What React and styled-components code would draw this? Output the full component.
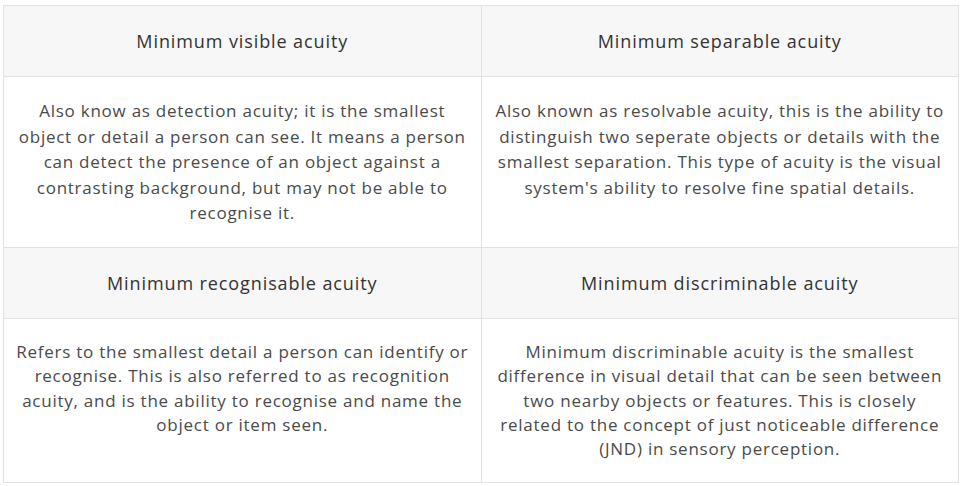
import React from "react";
import styled, { createGlobalStyle } from "styled-components";

const Global = createGlobalStyle`
  html, body { margin: 0; padding: 0; background: #ffffff; }
  body { font-family: "Open Sans", "DejaVu Sans", sans-serif; }
`;

const Page = styled.div`
  padding: 5px 4px 0 3px;
`;

const Table = styled.table`
  width: 100%;
  border-collapse: collapse;
  table-layout: fixed;
  border: 1px solid #e2e2e2;
`;

const HeadCell = styled.th`
  background: #f7f7f7;
  border: 1px solid #e2e2e2;
  color: #333333;
  font-weight: 400;
  font-size: 18px;
  letter-spacing: 0.9px;
  line-height: 24px;
  height: 70px;
  padding: 0 14px;
  text-align: center;
  vertical-align: middle;
`;

const BodyCell = styled.td`
  border: 1px solid #e2e2e2;
  color: #4a4a4a;
  font-size: 17px;
  letter-spacing: 0.75px;
  line-height: ${(p) => p.$lh || "24.5px"};
  padding: 21px 6px;
  text-align: center;
  vertical-align: top;
  white-space: nowrap;
`;

const Line = styled.span`
  display: block;
`;

const rows = [
  {
    heads: ["Minimum visible acuity", "Minimum separable acuity"],
    lh: "25.6px",
    bodies: [
      [
        "Also know as detection acuity; it is the smallest",
        "object or detail a person can see. It means a person",
        "can detect the presence of an object against a",
        "contrasting background, but may not be able to",
        "recognise it.",
      ],
      [
        "Also known as resolvable acuity, this is the ability to",
        "distinguish two seperate objects or details with the",
        "smallest separation. This type of acuity is the visual",
        "system's ability to resolve fine spatial details.",
      ],
    ],
  },
  {
    heads: ["Minimum recognisable acuity", "Minimum discriminable acuity"],
    lh: "24.3px",
    bodies: [
      [
        "Refers to the smallest detail a person can identify or",
        "recognise. This is also referred to as recognition",
        "acuity, and is the ability to recognise and name the",
        "object or item seen.",
      ],
      [
        "Minimum discriminable acuity is the smallest",
        "difference in visual detail that can be seen between",
        "two nearby objects or features. This is closely",
        "related to the concept of just noticeable difference",
        "(JND) in sensory perception.",
      ],
    ],
  },
];

export default function App() {
  return (
    <Page>
      <Global />
      <Table>
        <tbody>
          {rows.map((r, i) => (
            <React.Fragment key={i}>
              <tr>
                {r.heads.map((h) => (
                  <HeadCell key={h}>{h}</HeadCell>
                ))}
              </tr>
              <tr>
                {r.bodies.map((lines, j) => (
                  <BodyCell key={j} $lh={r.lh}>
                    {lines.map((l) => (
                      <Line key={l}>{l}</Line>
                    ))}
                  </BodyCell>
                ))}
              </tr>
            </React.Fragment>
          ))}
        </tbody>
      </Table>
    </Page>
  );
}
